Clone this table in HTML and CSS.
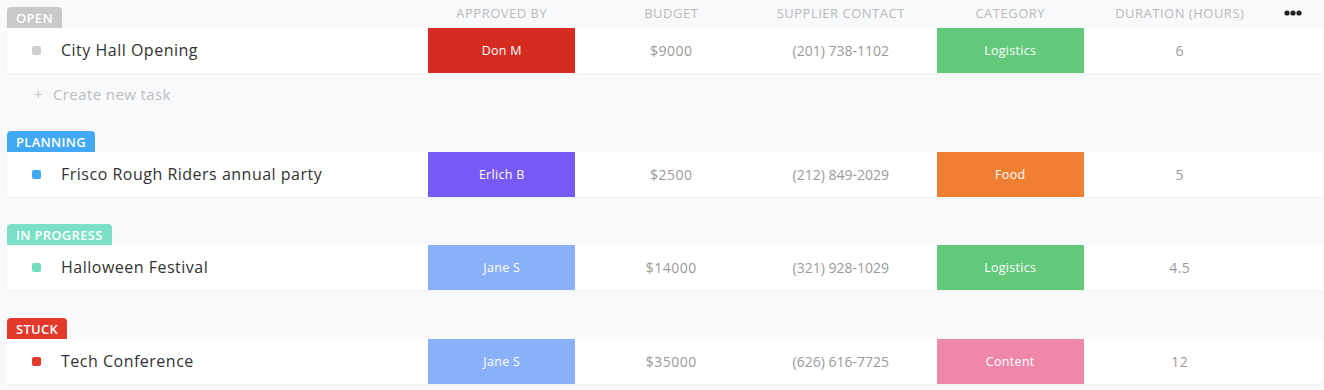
FILE: index.html
```html
<!DOCTYPE html>
<html lang="en">
<head>
<meta charset="utf-8">
<title>Tasks</title>
<link rel="stylesheet" href="styles.css">
</head>
<body>
<main class="board">
  <section class="group">
    <div class="group-head grid">
      <div class="head-name"><span class="tag tag-open">OPEN</span></div>
      <div class="col-title">Approved by</div>
      <div class="col-title">Budget</div>
      <div class="col-title">Supplier contact</div>
      <div class="col-title">Category</div>
      <div class="col-title">Duration (hours)</div>
      <div class="col-menu">
        <svg width="18" height="6" viewBox="0 0 18 6"><circle cx="3" cy="3" r="2.6" fill="#222"/><circle cx="9" cy="3" r="2.6" fill="#222"/><circle cx="15" cy="3" r="2.6" fill="#222"/></svg>
      </div>
    </div>
    <div class="task grid">
      <div class="name"><span class="dot dot-open"></span>City Hall Opening</div>
      <div class="cell"><span class="chip c-red">Don M</span></div>
      <div class="cell text">$9000</div>
      <div class="cell text phone">(201) 738-1102</div>
      <div class="cell"><span class="chip c-green">Logistics</span></div>
      <div class="cell text">6</div>
      <div></div>
    </div>
    <div class="create"><span class="plus">+</span>Create new task</div>
  </section>

  <section class="group g-planning">
    <div class="group-head"><span class="tag tag-planning">PLANNING</span></div>
    <div class="task grid">
      <div class="name"><span class="dot dot-planning"></span>Frisco Rough Riders annual party</div>
      <div class="cell"><span class="chip c-purple">Erlich B</span></div>
      <div class="cell text">$2500</div>
      <div class="cell text phone">(212) 849-2029</div>
      <div class="cell"><span class="chip c-orange">Food</span></div>
      <div class="cell text">5</div>
      <div></div>
    </div>
  </section>

  <section class="group g-next">
    <div class="group-head"><span class="tag tag-progress">IN PROGRESS</span></div>
    <div class="task grid">
      <div class="name"><span class="dot dot-progress"></span>Halloween Festival</div>
      <div class="cell"><span class="chip c-blue">Jane S</span></div>
      <div class="cell text">$14000</div>
      <div class="cell text phone">(321) 928-1029</div>
      <div class="cell"><span class="chip c-green">Logistics</span></div>
      <div class="cell text">4.5</div>
      <div></div>
    </div>
  </section>

  <section class="group g-last">
    <div class="group-head"><span class="tag tag-stuck">STUCK</span></div>
    <div class="task grid last">
      <div class="name"><span class="dot dot-stuck"></span>Tech Conference</div>
      <div class="cell"><span class="chip c-blue">Jane S</span></div>
      <div class="cell text">$35000</div>
      <div class="cell text phone">(626) 616-7725</div>
      <div class="cell"><span class="chip c-pink">Content</span></div>
      <div class="cell text">12</div>
      <div></div>
    </div>
  </section>
</main>
</body>
</html>
```
FILE: styles.css
```css
* { box-sizing: border-box; }
html, body { margin: 0; padding: 0; }
body {
  background: #f8f9fb;
  font-family: "Open Sans", "Liberation Sans", sans-serif;
  color: #333;
  width: 1324px;
  height: 390px;
  overflow: hidden;
}
.board {
  padding: 7px 1px 0 7px;
}
.grid {
  display: grid;
  grid-template-columns: 410px repeat(5, 169.5px) 1fr;
}
.group-head {
  height: 21px;
  display: flex;
  align-items: flex-end;
}
.group-head.grid {
  display: grid;
  align-items: start;
}
.head-name { display: flex; height: 21px; }
.col-title {
  text-align: center;
  font-size: 13px;
  line-height: 13px;
  color: #b9b9b9;
  text-transform: uppercase;
  letter-spacing: 0.5px;
}
.col-menu {
  display: flex;
  justify-content: center;
  padding-top: 3px;
  padding-right: 2px;
}
.tag {
  display: inline-block;
  height: 21px;
  line-height: 22px;
  padding: 0 9px;
  font-size: 13px;
  font-weight: 600;
  color: #fff;
  border-radius: 4px 4px 0 0;
  letter-spacing: 0.3px;
}
.tag-open { background: #c9c9c9; }
.tag-planning { background: #42a9f4; }
.tag-progress { background: #7be0c5; }
.tag-stuck { background: #e2392b; }

.task {
  height: 45px;
  background: #fff;
  box-shadow: 0 1px 2px rgba(0, 0, 0, 0.04);
}
.task.last { border-radius: 0 0 5px 0; }
.name {
  display: flex;
  align-items: center;
  padding-left: 25px;
  padding-bottom: 1px;
  font-size: 16px;
  color: #333;
  letter-spacing: 0.5px;
}
.dot {
  width: 9px;
  height: 9px;
  border-radius: 2px;
  margin-right: 20px;
  flex: none;
}
.dot-open { background: #cfcfcf; }
.dot-planning { background: #42a9f4; }
.dot-progress { background: #72dcbf; }
.dot-stuck { background: #e2392b; }

.cell {
  display: flex;
  align-items: center;
  justify-content: center;
}
.cell.text {
  font-size: 14px;
  color: #9a9a9a;
  letter-spacing: 0.5px;
}
.cell.text.phone { letter-spacing: 0; }
.chip {
  width: 147px;
  height: 45px;
  display: flex;
  align-items: center;
  justify-content: center;
  color: #fff;
  font-size: 12.5px;
  font-weight: 500;
  letter-spacing: 0.3px;
}
.c-red { background: #d52c21; }
.c-green { background: #63c97a; }
.c-purple { background: #7759f5; }
.c-orange { background: #f07f32; }
.c-blue { background: #89b0f8; }
.c-pink { background: #ef87a9; }

.create {
  height: 42px;
  display: flex;
  align-items: center;
  padding-left: 27px;
  font-size: 15px;
  color: #bdbdbd;
  letter-spacing: 0.4px;
}
.plus {
  font-size: 15px;
  margin-right: 10px;
  color: #c4c4c4;
}
.g-planning { margin-top: 16px; }
.g-next { margin-top: 27px; }
.g-last { margin-top: 28px; }
```
